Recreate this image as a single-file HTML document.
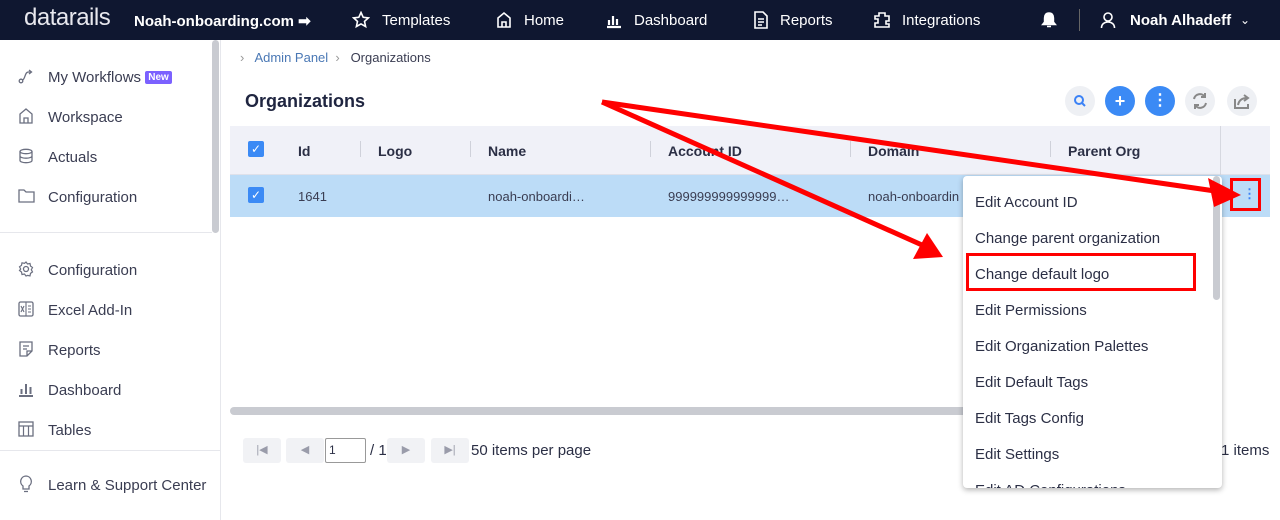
<!DOCTYPE html>
<html><head><style>
*{margin:0;padding:0;box-sizing:border-box}
body{width:1280px;height:520px;overflow:hidden;background:#fff;font-family:"Liberation Sans",sans-serif;color:#2b2f45;position:relative}
.top{position:absolute;left:0;top:0;width:1280px;height:40px;background:#0f1730;color:#fff}
.top span{position:absolute;top:12px;font-size:15px}
.top svg{position:absolute;top:11px}
.side{position:absolute;left:0;top:40px;width:221px;height:480px;border-right:1px solid #e6e7ec}
.si{position:absolute;left:48px;font-size:15px;color:#3a3d52}
.side svg{position:absolute;left:18px}
.abs{position:absolute}
.th{position:absolute;top:143px;font-size:14px;font-weight:bold;color:#2b2f45}
.sep{position:absolute;top:141px;width:1px;height:16px;background:#cfd1da}
.td{position:absolute;top:189px;font-size:13px;color:#3a3d52}
.mi{position:absolute;left:975px;font-size:15px;color:#2b2f45}
.btn{position:absolute;top:86px;width:30px;height:30px;border-radius:50%}
.pg{position:absolute;top:438px;height:25px;background:#f1f2f5;border-radius:3px;color:#9a9caa;font-size:11px;text-align:center;line-height:25px}
</style></head><body>
<div class="top">
<span style="left:24px;top:4px;font-size:24px;letter-spacing:-0.5px;color:#e8e8ee">datarails</span>
<span style="left:134px;font-weight:bold">Noah-onboarding.com ➡</span>
<svg style="left:352px" width="18" height="18" viewBox="0 0 18 18"><path d="M9 1.5l2.2 4.8 5.2.6-3.9 3.5 1.1 5.1L9 12.9l-4.6 2.6 1.1-5.1L1.6 6.9l5.2-.6z" fill="none" stroke="#fff" stroke-width="1.6"/></svg>
<span style="left:382px">Templates</span>
<svg style="left:496px" width="16" height="18" viewBox="0 0 16 18"><path d="M2 16V7l6-5 6 5v9H2zM6 16v-5h4v5" fill="none" stroke="#fff" stroke-width="1.6"/></svg>
<span style="left:524px">Home</span>
<svg style="left:605px" width="18" height="18" viewBox="0 0 18 18"><path d="M2 16h14M4 14V9M8 14V5M12 14V8" stroke="#fff" stroke-width="2.2"/></svg>
<span style="left:634px">Dashboard</span>
<svg style="left:753px" width="16" height="18" viewBox="0 0 16 18"><path d="M2 1h8l4 4v12H2zM5 8h6M5 11h6M5 14h4" fill="none" stroke="#fff" stroke-width="1.6"/></svg>
<span style="left:780px">Reports</span>
<svg style="left:873px" width="18" height="18" viewBox="0 0 18 18"><path d="M6 2h6v3h4v5h-3v3h3v3H2v-4h3V8H2V5h4z" fill="none" stroke="#fff" stroke-width="1.6"/></svg>
<span style="left:902px">Integrations</span>
<svg style="left:1041px" width="16" height="18" viewBox="0 0 16 18"><path d="M8 2c3 0 4.5 2 4.5 5v4l2 2.5h-13l2-2.5V7C3.5 4 5 2 8 2zM6 15.5h4" fill="#fff" stroke="#fff" stroke-width="1.4"/></svg>
<div class="abs" style="left:1079px;top:9px;width:1px;height:22px;background:#666"></div>
<svg style="left:1100px" width="16" height="18" viewBox="0 0 16 18"><circle cx="8" cy="6" r="4" fill="none" stroke="#fff" stroke-width="1.6"/><path d="M1.5 17c0-4 3-6 6.5-6s6.5 2 6.5 6" fill="none" stroke="#fff" stroke-width="1.6"/></svg>
<span style="left:1130px;font-weight:bold">Noah Alhadeff</span>
<span style="left:1240px;font-size:12px;top:13px">⌄</span>
</div>
<div class="side">
<svg style="top:28px" width="16" height="16" viewBox="0 0 16 16"><circle cx="3" cy="13" r="1.8" fill="none" stroke="#6b6f80" stroke-width="1.3"/><path d="M4.5 12c3-1 2-8 6-8h3M11 2l2.5 2-2.5 2" fill="none" stroke="#6b6f80" stroke-width="1.3"/></svg>
<div class="si" style="top:29px">My Workflows <span style="background:#7b61ff;color:#fff;font-size:10px;font-weight:bold;padding:1px 3px;border-radius:2px;vertical-align:2px">New</span></div>
<svg style="top:68px" width="16" height="16" viewBox="0 0 16 16"><path d="M2 15V6l6-5 6 5v9zM6 15v-5h4v5" fill="none" stroke="#6b6f80" stroke-width="1.3"/></svg>
<div class="si" style="top:69px">Workspace</div>
<svg style="top:108px" width="16" height="16" viewBox="0 0 16 16"><ellipse cx="8" cy="3.5" rx="6" ry="2.2" fill="none" stroke="#6b6f80" stroke-width="1.3"/><path d="M2 3.5v9c0 1.2 2.7 2.2 6 2.2s6-1 6-2.2v-9M2 8c0 1.2 2.7 2.2 6 2.2S14 9.2 14 8" fill="none" stroke="#6b6f80" stroke-width="1.3"/></svg>
<div class="si" style="top:109px">Actuals</div>
<svg style="top:148px" width="17" height="16" viewBox="0 0 17 16"><path d="M1 2h5l2 2h8v10H1z" fill="none" stroke="#6b6f80" stroke-width="1.3"/></svg>
<div class="si" style="top:149px">Configuration</div>
<div class="abs" style="left:0;top:192px;width:212px;height:1px;background:#e6e7ec"></div>
<div class="abs" style="left:212px;top:0;width:7px;height:193px;background:#c9cbd1;border-radius:4px"></div>
<svg style="top:221px" width="16" height="16" viewBox="0 0 16 16"><circle cx="8" cy="8" r="2.5" fill="none" stroke="#6b6f80" stroke-width="1.3"/><path d="M8 1l1.5 2 2.5-.5.5 2.5 2 1.5-1.2 2.2 1.2 2.2-2 1.5-.5 2.5-2.5-.5L8 15l-1.5-2-2.5.5-.5-2.5-2-1.5L2.7 8 1.5 5.8l2-1.5.5-2.5 2.5.5z" fill="none" stroke="#6b6f80" stroke-width="1.2"/></svg>
<div class="si" style="top:222px">Configuration</div>
<svg style="top:261px" width="16" height="16" viewBox="0 0 16 16"><rect x="1" y="1" width="14" height="14" rx="1.5" fill="none" stroke="#6b6f80" stroke-width="1.3"/><path d="M8 1v14M10 5h3M10 8h3M10 11h3M3 5l3 6M6 5l-3 6" fill="none" stroke="#6b6f80" stroke-width="1.1"/></svg>
<div class="si" style="top:262px">Excel Add-In</div>
<svg style="top:301px" width="16" height="16" viewBox="0 0 16 16"><path d="M2 1h12v9l-5 5H2zM5 5h6M5 8h4M9 15v-5h5" fill="none" stroke="#6b6f80" stroke-width="1.3"/></svg>
<div class="si" style="top:302px">Reports</div>
<svg style="top:341px" width="16" height="16" viewBox="0 0 16 16"><path d="M1 15h14M3.5 13V8M8 13V3M12.5 13V6" stroke="#6b6f80" stroke-width="2"/></svg>
<div class="si" style="top:342px">Dashboard</div>
<svg style="top:381px" width="16" height="16" viewBox="0 0 16 16"><rect x="1" y="1" width="14" height="14" fill="none" stroke="#6b6f80" stroke-width="1.3"/><path d="M1 5h14M5.5 5v10M10.5 5v10" stroke="#6b6f80" stroke-width="1.2"/></svg>
<div class="si" style="top:382px">Tables</div>
<div class="abs" style="left:0;top:410px;width:220px;height:1px;background:#e6e7ec"></div>
<svg style="top:435px" width="16" height="18" viewBox="0 0 16 18"><path d="M8 1a5.5 5.5 0 0 0-3 10v3h6v-3A5.5 5.5 0 0 0 8 1zM6 16.5h4" fill="none" stroke="#6b6f80" stroke-width="1.3"/></svg>
<div class="si" style="top:437px">Learn &amp; Support Center</div>
</div>
<div class="abs" style="left:240px;top:50px;font-size:13px;color:#999">›&nbsp;&nbsp; <span style="color:#4a78b5">Admin Panel</span> &nbsp;›&nbsp;&nbsp; <span style="color:#3a3d52">Organizations</span></div>
<div class="abs" style="left:245px;top:91px;font-size:18px;font-weight:bold;color:#1f2540">Organizations</div>
<div class="btn" style="left:1065px;background:#eef0f4"><svg width="30" height="30"><circle cx="14" cy="14" r="4" fill="none" stroke="#3b82f6" stroke-width="2"/><path d="M17 17l3 3" stroke="#3b82f6" stroke-width="2"/></svg></div>
<div class="btn" style="left:1105px;background:#3b8af5;color:#fff;text-align:center;line-height:30px;font-weight:bold;font-size:18px">+</div>
<div class="btn" style="left:1145px;background:#3b8af5;color:#fff;text-align:center;line-height:30px;font-weight:bold">⋮</div>
<div class="btn" style="left:1185px;background:#eef0f4"><svg width="30" height="30"><path d="M9 13a6 6 0 0 1 11-2M21 17a6 6 0 0 1-11 2" fill="none" stroke="#888" stroke-width="2"/><path d="M20 7v4h-4M10 23v-4h4" fill="none" stroke="#888" stroke-width="2"/></svg></div>
<div class="btn" style="left:1227px;background:#eef0f4"><svg width="30" height="30"><path d="M8 13v9h13v-4" fill="none" stroke="#888" stroke-width="2"/><path d="M11 19c1-5 4-7 9-7M17 9l4 3-4 3" fill="none" stroke="#888" stroke-width="2"/></svg></div>
<div class="abs" style="left:230px;top:126px;width:1040px;height:49px;background:#f0f1f8;border-bottom:1px solid #dfe1ea"></div>
<div class="abs" style="left:1220px;top:126px;width:1px;height:90px;background:#d6d8e0"></div>
<div class="abs" style="left:248px;top:141px;width:16px;height:16px;background:#3b8af5;border-radius:2px;color:#fff;font-size:12px;text-align:center;line-height:16px">✓</div>
<div class="th" style="left:298px">Id</div><div class="sep" style="left:360px"></div>
<div class="th" style="left:378px">Logo</div><div class="sep" style="left:470px"></div>
<div class="th" style="left:488px">Name</div><div class="sep" style="left:650px"></div>
<div class="th" style="left:668px">Account ID</div><div class="sep" style="left:850px"></div>
<div class="th" style="left:868px">Domain</div><div class="sep" style="left:1050px"></div>
<div class="th" style="left:1068px">Parent Org</div>
<div class="abs" style="left:230px;top:175px;width:1040px;height:42px;background:#bcdcf7"></div>
<div class="abs" style="left:248px;top:187px;width:16px;height:16px;background:#3b8af5;border-radius:2px;color:#fff;font-size:12px;text-align:center;line-height:16px">✓</div>
<div class="td" style="left:298px">1641</div>
<div class="td" style="left:488px">noah-onboardi…</div>
<div class="td" style="left:668px">999999999999999…</div>
<div class="td" style="left:868px">noah-onboardin</div>
<div class="abs" style="left:1243px;top:186px;color:#3b82f6;font-weight:bold;font-size:13px">⋮</div>
<div class="abs" style="left:1230px;top:178px;width:31px;height:33px;border:3px solid #f00"></div>
<div class="abs" style="left:230px;top:407px;width:740px;height:8px;background:#c9cbd1;border-radius:4px"></div>
<div class="pg" style="left:243px;width:38px">|◀</div>
<div class="pg" style="left:286px;width:38px">◀</div>
<div class="abs" style="left:325px;top:438px;width:41px;height:25px;border:1px solid #999;border-radius:2px;font-size:12px;padding:4px 3px">1</div>
<div class="abs" style="left:370px;top:442px;font-size:15px">/ 1</div>
<div class="pg" style="left:387px;width:38px">▶</div>
<div class="pg" style="left:431px;width:38px">▶|</div>
<div class="abs" style="left:471px;top:442px;font-size:15px">50 items per page</div>
<div class="abs" style="left:1221px;top:442px;font-size:15px">1 items</div>
<div class="abs" style="left:963px;top:176px;width:259px;height:312px;background:#fff;border-radius:4px;box-shadow:0 2px 6px rgba(0,0,0,.3);overflow:hidden">
<div class="abs" style="left:250px;top:0;width:7px;height:124px;background:#c9cbd1;border-radius:4px"></div>
</div>
<div class="mi" style="top:194px">Edit Account ID</div>
<div class="mi" style="top:230px">Change parent organization</div>
<div class="mi" style="top:266px">Change default logo</div>
<div class="abs" style="left:966px;top:253px;width:230px;height:38px;border:3px solid #f00"></div>
<div class="mi" style="top:302px">Edit Permissions</div>
<div class="mi" style="top:338px">Edit Organization Palettes</div>
<div class="mi" style="top:374px">Edit Default Tags</div>
<div class="mi" style="top:410px">Edit Tags Config</div>
<div class="mi" style="top:446px">Edit Settings</div>
<div class="abs" style="left:963px;top:476px;width:259px;height:12px;overflow:hidden"><div style="position:absolute;left:12px;top:6px;font-size:15px">Edit AD Configurations</div></div>
<svg class="abs" style="left:0;top:0" width="1280" height="520">
<line x1="602" y1="102" x2="1215" y2="191" stroke="#f00" stroke-width="5"/>
<polygon points="1241,195 1208,178 1214,207" fill="#f00"/>
<line x1="602" y1="102" x2="922" y2="245" stroke="#f00" stroke-width="5"/>
<polygon points="943,257 927,233 913,259" fill="#f00"/>
</svg>
</body></html>
